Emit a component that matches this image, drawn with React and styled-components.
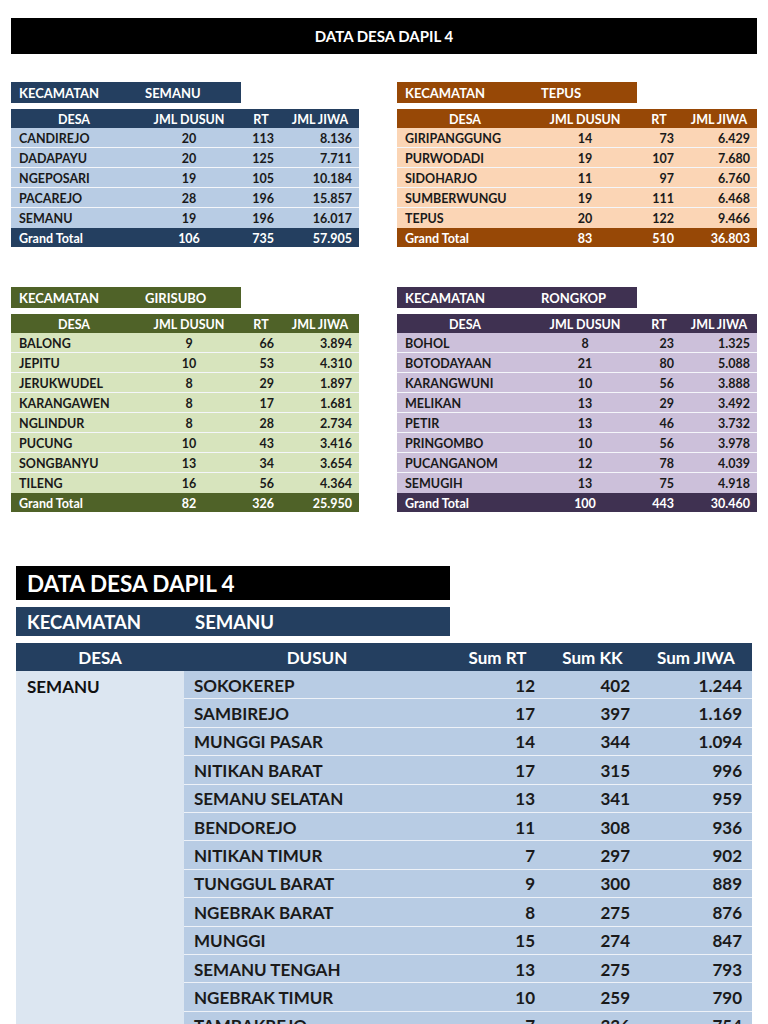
import React from 'react';
import styled, { createGlobalStyle } from 'styled-components';

const GlobalStyle = createGlobalStyle`
  html, body {
    margin: 0;
    padding: 0;
    background: #ffffff;
    overflow: hidden;
  }
  body {
    font-family: Lato, "Open Sans", "Liberation Sans", sans-serif;
    color: #111;
  }
`;

const themes = {
  blue: { dark: '#243f60', light: '#b8cce4' },
  orange: { dark: '#974806', light: '#fbd5b5' },
  green: { dark: '#4f6228', light: '#d7e4bd' },
  purple: { dark: '#3f3151', light: '#ccc0da' },
};

const Page = styled.div`
  width: 768px;
  height: 1024px;
  padding: 18px 11px 0 11px;
  box-sizing: border-box;
  overflow: hidden;
`;

const Banner = styled.div`
  height: 36px;
  background: #000;
  color: #fff;
  display: flex;
  align-items: center;
  justify-content: center;
  font-weight: 700;
  font-size: 15px;
`;

const BlockGrid = styled.div`
  display: grid;
  grid-template-columns: 348px 360px;
  column-gap: 38px;
  row-gap: 40px;
  margin-top: 28px;
  align-items: start;
`;

const Block = styled.div`
  display: flex;
  flex-direction: column;
  gap: 6px;
`;

const KecBar = styled.div`
  display: grid;
  grid-template-columns: ${({ $cols }) => `${$cols[0]}px ${$cols[1]}px`};
  height: 21px;
  align-items: center;
  background: ${({ $t }) => $t.dark};
  color: #fff;
  font-weight: 700;
  font-size: 13px;
  width: fit-content;

  span {
    padding-left: 8px;
  }
`;

const Table = styled.div`
  display: flex;
  flex-direction: column;
  font-size: 12.5px;
  font-weight: 700;
`;

const Row = styled.div`
  display: grid;
  grid-template-columns: ${({ $cols }) => $cols.map((c) => `${c}px`).join(' ')};
  align-items: center;
  height: ${({ $h }) => $h}px;
  padding-top: 1px;
  background: ${({ $bg }) => $bg};
  color: ${({ $fg }) => $fg};
  border-bottom: ${({ $line }) => ($line ? '1px solid #f4f6fa' : 'none')};
  box-sizing: border-box;
`;

const Cell = styled.div`
  text-align: ${({ $align }) => $align || 'left'};
  padding: ${({ $align }) => ($align === 'right' ? '0 7px 0 0' : $align === 'center' ? '0' : '0 0 0 8px')};
  white-space: nowrap;
`;

const SmallBlock = ({ kec, theme, cols, rows, total }) => {
  const t = themes[theme];
  return (
    <Block>
      <KecBar $t={t} $cols={cols}>
        <span>KECAMATAN</span>
        <span>{kec}</span>
      </KecBar>
      <Table>
        <Row $cols={cols} $h={19} $bg={t.dark} $fg="#fff">
          <Cell $align="center">DESA</Cell>
          <Cell $align="center">JML DUSUN</Cell>
          <Cell $align="center">RT</Cell>
          <Cell $align="center">JML JIWA</Cell>
        </Row>
        {rows.map((r, i) => (
          <Row key={r[0]} $cols={cols} $h={20} $bg={t.light} $fg="#1a1a1a" $line={i < rows.length - 1}>
            <Cell>{r[0]}</Cell>
            <Cell $align="center">{r[1]}</Cell>
            <Cell $align="right">{r[2]}</Cell>
            <Cell $align="right">{r[3]}</Cell>
          </Row>
        ))}
        <Row $cols={cols} $h={19} $bg={t.dark} $fg="#fff">
          <Cell>Grand Total</Cell>
          <Cell $align="center">{total[0]}</Cell>
          <Cell $align="right">{total[1]}</Cell>
          <Cell $align="right">{total[2]}</Cell>
        </Row>
      </Table>
    </Block>
  );
};

/* bottom detailed table */
const Detail = styled.section`
  margin: 54px 0 0 5px;
  display: flex;
  flex-direction: column;
`;

const BigBanner = styled.div`
  width: 434px;
  height: 34px;
  background: #000;
  color: #fff;
  display: flex;
  align-items: center;
  padding-left: 11px;
  box-sizing: border-box;
  font-size: 22.5px;
  font-weight: 700;
`;

const BigKecBar = styled.div`
  margin-top: 7px;
  width: 434px;
  height: 29px;
  background: #243f60;
  color: #fff;
  display: grid;
  grid-template-columns: 168px 1fr;
  align-items: center;
  font-size: 18.5px;
  font-weight: 700;

  span {
    padding-left: 11px;
  }
`;

const BigHead = styled.div`
  margin-top: 7px;
  width: 736px;
  height: 28px;
  display: grid;
  grid-template-columns: 168px 266px 95px 95px 112px;
  align-items: center;
  background: #243f60;
  color: #fff;
  font-size: 17px;
  font-weight: 700;
  text-align: center;
`;

const BigBody = styled.div`
  width: 736px;
  display: flex;
`;

const DesaCol = styled.div`
  width: 168px;
  flex: none;
  background: #dce6f1;
  padding: 5px 0 0 11px;
  box-sizing: border-box;
  font-size: 17px;
  font-weight: 700;
`;

const DusunList = styled.div`
  flex: 1;
  display: flex;
  flex-direction: column;
`;

const DusunRow = styled.div`
  display: grid;
  grid-template-columns: 266px 95px 95px 112px;
  align-items: center;
  height: 28.4px;
  padding-top: 1px;
  background: #b8cce4;
  border-bottom: 1.5px solid #eef2f8;
  box-sizing: border-box;
  font-size: 17px;
  font-weight: 700;
  color: #1a1a1a;
`;

const BigCell = styled.div`
  text-align: ${({ $num }) => ($num ? 'right' : 'left')};
  padding: ${({ $num }) => ($num ? '0 10px 0 0' : '0 0 0 10px')};
  white-space: nowrap;
`;

const leftCols = [126, 104, 40, 78];
const rightCols = [136, 104, 44, 76];

const semanu = [
  ['CANDIREJO', 20, 113, '8.136'],
  ['DADAPAYU', 20, 125, '7.711'],
  ['NGEPOSARI', 19, 105, '10.184'],
  ['PACAREJO', 28, 196, '15.857'],
  ['SEMANU', 19, 196, '16.017'],
];

const tepus = [
  ['GIRIPANGGUNG', 14, 73, '6.429'],
  ['PURWODADI', 19, 107, '7.680'],
  ['SIDOHARJO', 11, 97, '6.760'],
  ['SUMBERWUNGU', 19, 111, '6.468'],
  ['TEPUS', 20, 122, '9.466'],
];

const girisubo = [
  ['BALONG', 9, 66, '3.894'],
  ['JEPITU', 10, 53, '4.310'],
  ['JERUKWUDEL', 8, 29, '1.897'],
  ['KARANGAWEN', 8, 17, '1.681'],
  ['NGLINDUR', 8, 28, '2.734'],
  ['PUCUNG', 10, 43, '3.416'],
  ['SONGBANYU', 13, 34, '3.654'],
  ['TILENG', 16, 56, '4.364'],
];

const rongkop = [
  ['BOHOL', 8, 23, '1.325'],
  ['BOTODAYAAN', 21, 80, '5.088'],
  ['KARANGWUNI', 10, 56, '3.888'],
  ['MELIKAN', 13, 29, '3.492'],
  ['PETIR', 13, 46, '3.732'],
  ['PRINGOMBO', 10, 56, '3.978'],
  ['PUCANGANOM', 12, 78, '4.039'],
  ['SEMUGIH', 13, 75, '4.918'],
];

const dusun = [
  ['SOKOKEREP', 12, 402, '1.244'],
  ['SAMBIREJO', 17, 397, '1.169'],
  ['MUNGGI PASAR', 14, 344, '1.094'],
  ['NITIKAN BARAT', 17, 315, '996'],
  ['SEMANU SELATAN', 13, 341, '959'],
  ['BENDOREJO', 11, 308, '936'],
  ['NITIKAN TIMUR', 7, 297, '902'],
  ['TUNGGUL BARAT', 9, 300, '889'],
  ['NGEBRAK BARAT', 8, 275, '876'],
  ['MUNGGI', 15, 274, '847'],
  ['SEMANU TENGAH', 13, 275, '793'],
  ['NGEBRAK TIMUR', 10, 259, '790'],
  ['TAMBAKREJO', 7, 336, '754'],
];

const App = () => (
  <Page>
    <GlobalStyle />
    <Banner>DATA DESA DAPIL 4</Banner>
    <BlockGrid>
      <SmallBlock kec="SEMANU" theme="blue" cols={leftCols} rows={semanu} total={[106, 735, '57.905']} />
      <SmallBlock kec="TEPUS" theme="orange" cols={rightCols} rows={tepus} total={[83, 510, '36.803']} />
      <SmallBlock kec="GIRISUBO" theme="green" cols={leftCols} rows={girisubo} total={[82, 326, '25.950']} />
      <SmallBlock kec="RONGKOP" theme="purple" cols={rightCols} rows={rongkop} total={[100, 443, '30.460']} />
    </BlockGrid>

    <Detail>
      <BigBanner>DATA DESA DAPIL 4</BigBanner>
      <BigKecBar>
        <span>KECAMATAN</span>
        <span>SEMANU</span>
      </BigKecBar>
      <BigHead>
        <div>DESA</div>
        <div>DUSUN</div>
        <div>Sum RT</div>
        <div>Sum KK</div>
        <div>Sum JIWA</div>
      </BigHead>
      <BigBody>
        <DesaCol>SEMANU</DesaCol>
        <DusunList>
          {dusun.map((d) => (
            <DusunRow key={d[0]}>
              <BigCell>{d[0]}</BigCell>
              <BigCell $num>{d[1]}</BigCell>
              <BigCell $num>{d[2]}</BigCell>
              <BigCell $num>{d[3]}</BigCell>
            </DusunRow>
          ))}
        </DusunList>
      </BigBody>
    </Detail>
  </Page>
);

export default App;
